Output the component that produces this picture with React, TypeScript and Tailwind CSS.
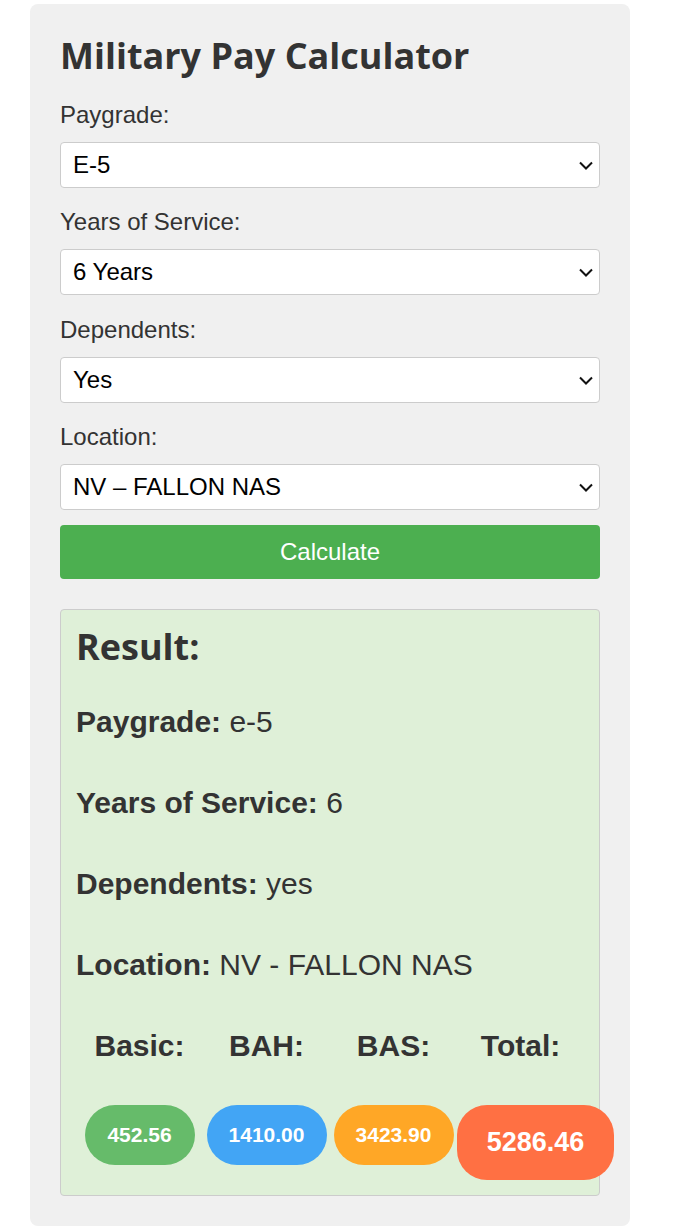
import React, { useState } from 'react';

const LOCATIONS = ['NV – FALLON NAS', 'CA – SAN DIEGO', 'VA – NORFOLK/PORTSMOUTH', 'TX – FORT HOOD'];

const Field: React.FC<{
  label: string;
  value: string;
  options: string[];
  onChange: (v: string) => void;
  spacing: string;
}> = ({ label, value, options, onChange, spacing }) => (
  <div className={spacing}>
    <label className="mb-[13px] block text-[24px] leading-[28px] text-[#333]">{label}</label>
    <div className="relative">
      <select
        value={value}
        onChange={(e) => onChange(e.target.value)}
        className="block h-[46px] w-full appearance-none rounded-[4px] border border-[#ccc] bg-white pl-[12px] pr-[30px] text-[24px] text-black outline-none"
      >
        {options.map((o) => (
          <option key={o} value={o}>
            {o}
          </option>
        ))}
      </select>
      {/* native-looking chevron */}
      <svg
        className="pointer-events-none absolute right-[7px] top-[19px]"
        width="14"
        height="9"
        viewBox="0 0 14 9"
        fill="none"
      >
        <path d="M1 1.5 L7 7.5 L13 1.5" stroke="#111" strokeWidth="2" />
      </svg>
    </div>
  </div>
);

const Row: React.FC<{ label: string; value: string; first?: boolean }> = ({ label, value, first }) => (
  <p className={`text-[30px] leading-[34px] text-[#333] ${first ? 'mt-[37px]' : 'mt-[47px]'}`}>
    <strong className="font-bold">{label}</strong> {value}
  </p>
);

const App: React.FC = () => {
  const [grade, setGrade] = useState('E-5');
  const [years, setYears] = useState('6 Years');
  const [deps, setDeps] = useState('Yes');
  const [loc, setLoc] = useState(LOCATIONS[0]);

  return (
    <div className="min-h-screen bg-white pl-[30px] pt-[4px] pb-[6px] font-['Liberation_Sans',Arial,sans-serif]">
      <div className="w-[600px] rounded-[8px] bg-[#f0f0f0] px-[30px] pt-[30px] pb-[30px]">
        <h1 className="mb-[24px] font-['Open_Sans',sans-serif] text-[36px] font-bold leading-[43px] text-[#333]">
          Military Pay Calculator
        </h1>

        <Field
          label="Paygrade:"
          value={grade}
          onChange={setGrade}
          spacing="mb-[20px]"
          options={['E-1', 'E-2', 'E-3', 'E-4', 'E-5', 'E-6', 'E-7', 'O-1', 'O-2', 'O-3']}
        />
        <Field
          label="Years of Service:"
          value={years}
          onChange={setYears}
          spacing="mb-[21px]"
          options={['2 Years', '3 Years', '4 Years', '6 Years', '8 Years', '10 Years']}
        />
        <Field label="Dependents:" value={deps} onChange={setDeps} spacing="mb-[20px]" options={['Yes', 'No']} />
        <Field label="Location:" value={loc} onChange={setLoc} spacing="mb-[15px]" options={LOCATIONS} />

        <button className="mb-[30px] block h-[54px] w-full rounded-[4px] bg-[#4caf50] text-[24px] text-white">
          Calculate
        </button>

        <div className="rounded-[4px] border border-[#ccc] bg-[#dff0d8] p-[15px]">
          <h2 className="font-['Open_Sans',sans-serif] text-[36px] font-bold leading-[43px] text-[#333]">Result:</h2>
          <Row label="Paygrade:" value="e-5" first />
          <Row label="Years of Service:" value="6" />
          <Row label="Dependents:" value="yes" />
          <Row label="Location:" value="NV - FALLON NAS" />

          <div className="mt-[47px] grid grid-cols-4 text-center text-[30px] font-bold leading-[34px] text-[#333]">
            <div>Basic:</div>
            <div>BAH:</div>
            <div>BAS:</div>
            <div>Total:</div>
          </div>

          <div className="mt-[42px] grid grid-cols-4 items-start">
            <div className="flex h-[60px] w-[110px] items-center justify-center justify-self-center rounded-[30px] bg-[#66bb6a] text-[21px] font-bold text-white">
              452.56
            </div>
            <div className="flex h-[60px] w-[120px] items-center justify-center justify-self-center rounded-[30px] bg-[#42a5f5] text-[21px] font-bold text-white">
              1410.00
            </div>
            <div className="flex h-[60px] w-[120px] items-center justify-center justify-self-center rounded-[30px] bg-[#ffa726] text-[21px] font-bold text-white">
              3423.90
            </div>
            <div className="flex h-[75px] w-[157px] items-center justify-center justify-self-start rounded-[30px] bg-[#ff7043] text-[27px] font-bold text-white">
              5286.46
            </div>
          </div>
        </div>
      </div>
    </div>
  );
};

export default App;
